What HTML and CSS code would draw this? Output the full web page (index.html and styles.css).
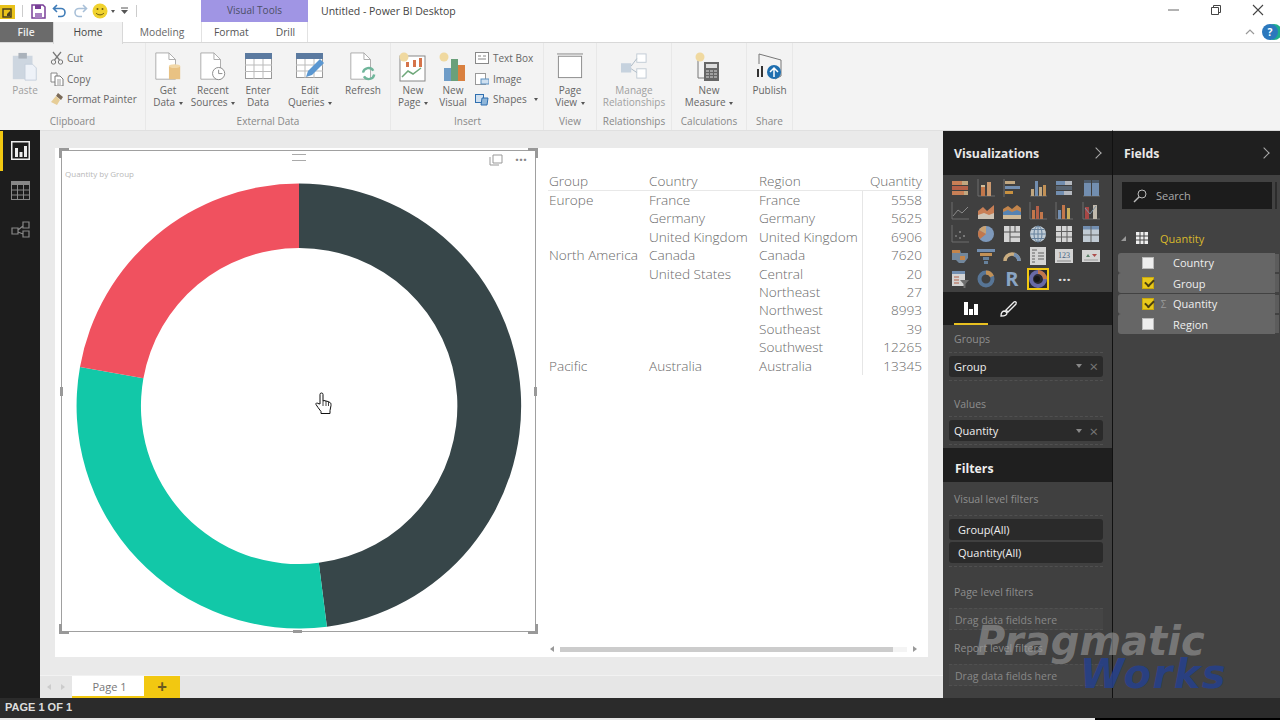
FILE: index.html
```html
<!DOCTYPE html>
<html>
<head lang="en">
    <meta charset="UTF-8">
    <title>Untitled - Power BI Desktop</title>
    <link rel="stylesheet" href="styles.css">
</head>
<body>
<!-- title bar -->
<header class="titlebar">
    <div class="qat">
        <svg class="app" width="15" height="15" viewBox="0 0 15 15"><rect width="15" height="15" y="1" fill="#e9c21b"/><path d="M3 5h8v8H3z" fill="none" stroke="#4a4020" stroke-width="1.5"/><path d="M7 10l3-3v5H7z" fill="#4a4020"/></svg>
        <i class="qat_sep"></i>
        <svg class="save" width="15" height="15" viewBox="0 0 15 15"><path d="M1 1h11l2 2v11H1z" fill="#fff" stroke="#7a3f98" stroke-width="1.5"/><path d="M4 1h6v4H4z" fill="#7a3f98"/><path d="M4 9h7v5H4z" fill="#a77fc0"/></svg>
        <svg width="15" height="14" viewBox="0 0 15 14"><path d="M5 1L1.5 4.5 5 8M2 4.500h7a4 4 0 0 1 0 8H6" fill="none" stroke="#3f7cb8" stroke-width="1.6"/></svg>
        <svg width="15" height="14" viewBox="0 0 15 14"><path d="M10 1l3.500 3.500L10 8M13 4.500H6a4 4 0 0 0 0 8h3" fill="none" stroke="#a9c0d8" stroke-width="1.6"/></svg>
        <svg class="smile" width="16" height="16" viewBox="0 0 16 16"><circle cx="8" cy="8" r="7.500" fill="#f0d22e"/><circle cx="5.500" cy="6" r="1" fill="#6b5a10"/><circle cx="10.500" cy="6" r="1" fill="#6b5a10"/><path d="M4 10c2 2.500 6 2.500 8 0" fill="none" stroke="#6b5a10"/></svg>
        <i class="caret qat_caret"></i>
        <svg class="qat_more" width="7" height="8" viewBox="0 0 7 8"><path d="M0 1h7" stroke="#555"/><path d="M0 3h7L3.500 7z" fill="#555"/></svg>
        <i class="qat_sep last"></i>
    </div>
    <div class="ctx">Visual Tools</div>
    <div class="win_title">Untitled - Power BI Desktop</div>
    <div class="win_btns">
        <svg width="14" height="14" viewBox="0 0 14 14"><path d="M1 7h11" stroke="#666"/></svg>
        <svg width="14" height="14" viewBox="0 0 14 14"><path d="M2.500 4.500h7v7h-7zM4.500 4V2.500h7v7H10" fill="none" stroke="#444"/></svg>
        <svg width="14" height="14" viewBox="0 0 14 14"><path d="M2 2l10 10M12 2L2 12" stroke="#444" stroke-width="1.100"/></svg>
    </div>
</header>

<!-- ribbon tabs -->
<nav class="tabs">
    <div class="tab_file">File</div>
    <div class="tab tab_home">Home</div>
    <div class="tab tab_model">Modeling</div>
    <div class="tab_ctx">
        <span>Format</span>
        <span>Drill</span>
    </div>
    <div class="tabs_right">
        <svg width="10" height="6" viewBox="0 0 10 6"><path d="M1 5l4-4 4 4" fill="none" stroke="#999" stroke-width="1.200"/></svg>
        <span class="help">?</span>
    </div>
</nav>

<!-- ribbon -->
<section class="ribbon">
    <div class="group g_clip">
        <div class="group_c">
            <div class="big w_paste dim">
                <svg width="28" height="32" viewBox="0 0 28 32"><rect x="1" y="4" width="21" height="25" fill="#cdd6e0"/><rect x="7" y="1" width="9" height="6" fill="#aab2bb"/><path d="M14 13h8l4 4v13H14z" fill="#eef2f8" stroke="#c5cfdc"/></svg>
                <span>Paste</span>
            </div>
            <div class="smalls">
                <div class="small"><svg width="14" height="14" viewBox="0 0 14 14"><circle cx="3.500" cy="11" r="2.200" fill="none" stroke="#777"/><circle cx="10.500" cy="11" r="2.200" fill="none" stroke="#777"/><path d="M4.500 9L11 1M9.500 9L3 1" stroke="#777" stroke-width="1.200"/></svg>Cut</div>
                <div class="small"><svg width="14" height="14" viewBox="0 0 14 14"><path d="M1 1h6v9H1z" fill="#fff" stroke="#888"/><path d="M5 4h5l3 3v7H5z" fill="#fff" stroke="#777"/><path d="M7 8h4M7 10h4M7 12h4" stroke="#999"/></svg>Copy</div>
                <div class="small"><svg width="14" height="14" viewBox="0 0 14 14"><path d="M8 1l5 4-2 3-5-4z" fill="#7a6a58"/><path d="M6 4l4 4-3 5-6-3z" fill="#e6cd97"/></svg>Format Painter</div>
            </div>
        </div>
        <div class="group_t">Clipboard</div>
    </div>
    <div class="group g_data">
        <div class="group_c">
            <div class="big w_get">
                <svg width="28" height="32" viewBox="0 0 28 32"><path d="M1 1h14l7 7v21H1z" fill="#fff" stroke="#aaa"/><path d="M15 1v7h7" fill="none" stroke="#aaa"/><path d="M15 15h12v14H15z" fill="#e9c283"/><ellipse cx="21" cy="15" rx="6" ry="2" fill="#f2d8a8"/></svg>
                <span>Get<br>Data <i class="caret"></i></span>
            </div>
            <div class="big w_recent">
                <svg width="28" height="32" viewBox="0 0 28 32"><path d="M1 1h14l7 7v21H1z" fill="#fff" stroke="#aaa"/><path d="M15 1v7h7" fill="none" stroke="#aaa"/><circle cx="20" cy="23" r="6.500" fill="#fff" stroke="#888"/><path d="M20 19v4h4" fill="none" stroke="#888"/></svg>
                <span>Recent<br>Sources <i class="caret"></i></span>
            </div>
            <div class="big w_enter">
                <svg width="27" height="26" viewBox="0 0 27 26" class="low"><rect x=".5" y=".5" width="26" height="25" fill="#fff" stroke="#999"/><rect width="27" height="6" fill="#5b7aa0"/><path d="M0 12h27M0 18.500h27M9 6v20M18 6v20" stroke="#bbb"/></svg>
                <span>Enter<br>Data</span>
            </div>
            <div class="big w_edit">
                <svg width="28" height="26" viewBox="0 0 28 26" class="low"><rect x=".5" y=".5" width="26" height="24" fill="#fff" stroke="#999"/><rect width="27" height="6" fill="#5b7aa0"/><path d="M0 12h27M0 18h27M9 6v19M18 6v19" stroke="#bbb"/><path d="M10 24l2-6L24 6l4 4-12 12z" fill="#5b97d1"/></svg>
                <span>Edit<br>Queries <i class="caret"></i></span>
            </div>
            <div class="big w_refresh">
                <svg width="28" height="32" viewBox="0 0 28 32"><path d="M1 1h14l7 7v21H1z" fill="#fff" stroke="#aaa"/><path d="M15 1v7h7" fill="none" stroke="#aaa"/><path d="M14 22a6 6 0 0 1 11-2M26 24a6 6 0 0 1-11 2" fill="none" stroke="#6fb59a" stroke-width="2.500"/></svg>
                <span>Refresh</span>
            </div>
        </div>
        <div class="group_t">External Data</div>
    </div>
    <div class="group g_insert">
        <div class="group_c">
            <div class="big w_newp">
                <svg width="28" height="30" viewBox="0 0 28 30"><rect x="1" y="4" width="25" height="25" fill="#fff" stroke="#888"/><path d="M7 15v-5h3v5zM14 15V8h3v7zM20 15V6h3v9z" fill="#d5734a"/><path d="M3 25l6-6 5 3 8-6" fill="none" stroke="#6fa87a" stroke-width="1.500"/><circle cx="5" cy="5" r="4.500" fill="#f0d9a0"/></svg>
                <span>New<br>Page <i class="caret"></i></span>
            </div>
            <div class="big w_newv">
                <svg width="28" height="30" viewBox="0 0 28 30"><rect x="5" y="16" width="7" height="13" fill="#6e9cc7"/><rect x="12" y="7" width="7" height="22" fill="#6aa07a"/><rect x="19" y="13" width="7" height="16" fill="#d9803f"/><circle cx="5" cy="5" r="4.500" fill="#f0d9a0"/></svg>
                <span>New<br>Visual</span>
            </div>
            <div class="smalls">
                <div class="small"><svg width="14" height="14" viewBox="0 0 14 14"><rect x=".5" y="1.500" width="13" height="11" fill="#fff" stroke="#888"/><path d="M3 5h3M3 8h8M8 5h3" stroke="#888"/></svg>Text Box</div>
                <div class="small"><svg width="14" height="14" viewBox="0 0 14 14"><rect x=".5" y="1.500" width="10" height="11" fill="#fff" stroke="#999"/><rect x="6" y="7" width="8" height="5" fill="#cfe0f0" stroke="#5b8fc0"/></svg>Image</div>
                <div class="small"><svg width="14" height="14" viewBox="0 0 14 14"><rect x=".5" y="2.500" width="8" height="8" fill="#cfe0f0" stroke="#2f6fb0"/><path d="M7 6l6 0-1 7H6z" fill="#8fb6d9" stroke="#2f6fb0"/></svg>Shapes <i class="caret"></i></div>
            </div>
        </div>
        <div class="group_t">Insert</div>
    </div>
    <div class="group g_view">
        <div class="group_c">
            <div class="big w_pview">
                <svg width="28" height="28" viewBox="0 0 28 28" class="low"><rect x="1.500" y="3.500" width="25" height="23" fill="#fff" stroke="#888"/><path d="M0 1h28" stroke="#bbb" stroke-width="2"/></svg>
                <span>Page<br>View <i class="caret"></i></span>
            </div>
        </div>
        <div class="group_t">View</div>
    </div>
    <div class="group g_rel">
        <div class="group_c">
            <div class="big w_manage dim">
                <svg width="28" height="28" viewBox="0 0 28 28" class="low"><rect y="11" width="11" height="10" fill="#c6d2de"/><rect x="17" y="1" width="10" height="9" fill="#fff" stroke="#c0cad4"/><rect x="17" y="17" width="10" height="10" fill="#fff" stroke="#c0cad4"/><path d="M11 14l6-8M11 17l6 4" stroke="#aab8c4"/></svg>
                <span>Manage<br>Relationships</span>
            </div>
        </div>
        <div class="group_t">Relationships</div>
    </div>
    <div class="group g_calc">
        <div class="group_c">
            <div class="big w_meas">
                <svg width="28" height="30" viewBox="0 0 28 30"><path d="M3 8v18h6" fill="none" stroke="#777"/><rect x="9" y="10" width="15" height="19" fill="#666"/><rect x="11" y="12" width="11" height="4" fill="#ddd"/><path d="M11 19h11M11 22h11M11 25h11" stroke="#ddd" stroke-dasharray="3 1"/><circle cx="5" cy="5" r="4.500" fill="#f0d9a0"/></svg>
                <span>New<br>Measure <i class="caret"></i></span>
            </div>
        </div>
        <div class="group_t">Calculations</div>
    </div>
    <div class="group g_share">
        <div class="group_c">
            <div class="big w_pub">
                <svg width="28" height="30" viewBox="0 0 28 30"><path d="M3 12V2l22 6v16l-6 3" fill="none" stroke="#777"/><path d="M1 17h2v8H1zM5 14h2v11H5z" fill="#333"/><circle cx="18" cy="20" r="7" fill="#1f6fb0"/><path d="M18 25v-8M14 20l4-4 4 4" fill="none" stroke="#fff" stroke-width="1.500"/></svg>
                <span>Publish</span>
            </div>
        </div>
        <div class="group_t">Share</div>
    </div>
</section>

<div class="main">
    <!-- left rail -->
    <aside class="rail">
        <div class="rail_btn on"><svg width="19" height="19" viewBox="0 0 19 19"><rect x=".75" y=".75" width="17.500" height="17.500" fill="none" stroke="#eee" stroke-width="1.500"/><path d="M4 7h3v9H4zM8.500 11h3v5h-3zM13 5h3v11h-3z" fill="#eee"/></svg></div>
        <div class="rail_btn"><svg width="19" height="19" viewBox="0 0 19 19"><rect x=".5" y=".5" width="18" height="18" fill="none" stroke="#888"/><rect width="19" height="4" fill="#888"/><path d="M0 9h19M0 14h19M6.500 4v15M12.500 4v15" stroke="#888"/></svg></div>
        <div class="rail_btn"><svg width="19" height="19" viewBox="0 0 19 19"><path d="M1 8h6v6H1zM12 2h6v6h-6zM12 11h6v6h-6zM7 10l5-4M7 12l5 2" fill="none" stroke="#888" stroke-width="1.200"/></svg></div>
    </aside>

    <!-- report canvas -->
    <div class="canvas">
        <div class="page_wrap">
            <div class="page">
                <!-- donut visual -->
                <div class="visual donut_v">
                    <div class="v_title">Quantity by Group</div>
                    <svg class="donut" width="446" height="446" viewBox="-223 -223 446 446">
                        <path d="M0 -222.500A222.500 222.500 0 0 1 27.900 220.700L19.800 156.800A158 158 0 0 0 0 -158Z" fill="#374649"/>
                        <path d="M27.900 220.700A222.500 222.500 0 0 1 -219 -39L-155.600 -27.700A158 158 0 0 0 19.800 156.800Z" fill="#12c8a8"/>
                        <path d="M-219 -39A222.500 222.500 0 0 1 0 -222.500L0 -158A158 158 0 0 0 -155.600 -27.700Z" fill="#f0515f"/>
                    </svg>
                    <div class="grip"></div>
                    <div class="v_tools">
                        <svg width="14" height="12" viewBox="0 0 14 12"><path d="M1 3v8h9M4 9V1h9v8z" fill="none" stroke="#999"/></svg>
                        <span>···</span>
                    </div>
                    <i class="hd tl"></i><i class="hd tr"></i><i class="hd bl"></i><i class="hd br"></i>
                    <i class="hd ml"></i><i class="hd mr"></i><i class="hd bm"></i>
                </div>
                <!-- matrix visual -->
                <div class="visual table_v">
                    <div class="t_row t_head"><div>Group</div><div>Country</div><div>Region</div><div class="num">Quantity</div></div>
                    <div class="t_row"><div>Europe</div><div>France</div><div>France</div><div class="num">5558</div></div>
                    <div class="t_row"><div></div><div>Germany</div><div>Germany</div><div class="num">5625</div></div>
                    <div class="t_row"><div></div><div>United Kingdom</div><div>United Kingdom</div><div class="num">6906</div></div>
                    <div class="t_row"><div>North America</div><div>Canada</div><div>Canada</div><div class="num">7620</div></div>
                    <div class="t_row"><div></div><div>United States</div><div>Central</div><div class="num">20</div></div>
                    <div class="t_row"><div></div><div></div><div>Northeast</div><div class="num">27</div></div>
                    <div class="t_row"><div></div><div></div><div>Northwest</div><div class="num">8993</div></div>
                    <div class="t_row"><div></div><div></div><div>Southeast</div><div class="num">39</div></div>
                    <div class="t_row"><div></div><div></div><div>Southwest</div><div class="num">12265</div></div>
                    <div class="t_row"><div>Pacific</div><div>Australia</div><div>Australia</div><div class="num">13345</div></div>
                    <div class="t_scroll">
                        <i class="arr_l"></i>
                        <div class="t_track"></div>
                        <i class="arr_r"></i>
                    </div>
                </div>
            </div>
        </div>
        <div class="pagetabs">
            <div class="pt_nav"><i class="arr_l"></i><i class="arr_r"></i></div>
            <div class="pt_page">Page 1</div>
            <div class="pt_add">+</div>
        </div>
    </div>

    <!-- visualizations pane -->
    <aside class="pane viz">
        <div class="pane_h">Visualizations<i class="chev"></i></div>
        <div class="tiles">
            <svg viewBox="0 0 18 18"><path d="M1 2h10v4H1zM1 12h12v4H1z" fill="#e08a5a"/><path d="M11 2h6v4h-6zM13 12h4v4h-4z" fill="#d8b98c"/><path d="M1 7h16v4H1z" fill="#c9664a"/></svg>
            <svg viewBox="0 0 18 18"><path d="M1 0v17h17" fill="none" stroke="#777"/><path d="M4 8h4v9H4z" fill="#d9814e"/><path d="M10 3h4v14h-4z" fill="#e2a878"/><path d="M4 6h4v2H4z" fill="#ecd3aa"/></svg>
            <svg viewBox="0 0 18 18"><path d="M1 0v18" stroke="#777"/><path d="M2 2h10v3H2z" fill="#d8b98c"/><path d="M2 7h15v3H2z" fill="#7b9cc4"/><path d="M2 12h8v3H2z" fill="#e0a040"/></svg>
            <svg viewBox="0 0 18 18"><path d="M1 17h17" stroke="#777"/><path d="M2 10h3v7H2zM10 8h3v9h-3z" fill="#d8b98c"/><path d="M6 2h3v15H6z" fill="#7b9cc4"/><path d="M14 6h3v11h-3z" fill="#d9a05a"/></svg>
            <svg viewBox="0 0 18 18"><path d="M1 2h9v4H1zM1 12h8v4H1z" fill="#7b9cc4"/><path d="M10 2h7v4h-7zM9 12h8v4H9z" fill="#c9ced6"/><path d="M1 7h16v4H1z" fill="#5d6b7a"/></svg>
            <svg viewBox="0 0 18 18"><path d="M1 17h17" stroke="#777"/><path d="M2 4h7v13H2zM10 4h7v13h-7z" fill="#7b9cc4"/><path d="M2 1h7v3H2zM10 1h7v3h-7z" fill="#4f5f72"/></svg>
            <svg viewBox="0 0 18 18"><path d="M1 0v17h17" fill="none" stroke="#777"/><path d="M2 14l5-6 4 3 6-6" fill="none" stroke="#999"/></svg>
            <svg viewBox="0 0 18 18"><path d="M1 17V9l5-4 4 4 7-6v14z" fill="#e08a5a"/><path d="M1 17v-4l6-2 5 2 5-2v6z" fill="#e6dccb"/></svg>
            <svg viewBox="0 0 18 18"><path d="M0 7l5-3 4 3 5-4 4 3v4H0z" fill="#d9914e"/><path d="M0 10l5-2 4 2 5-2 4 2v3H0z" fill="#5b8fc7"/><path d="M0 13h18v4H0z" fill="#e8d0a8"/></svg>
            <svg viewBox="0 0 18 18"><path d="M1 0v17h17" fill="none" stroke="#777"/><path d="M3 8h3v9H3zM11 10h3v7h-3z" fill="#d9814e"/><path d="M7 4h3v13H7z" fill="#c9664a"/></svg>
            <svg viewBox="0 0 18 18"><path d="M1 0v17h17" fill="none" stroke="#777"/><path d="M3 8h3v9H3z" fill="#7b9cc4"/><path d="M7 3h3v14H7z" fill="#d9814e"/><path d="M12 6h3v11h-3z" fill="#e0c060"/></svg>
            <svg viewBox="0 0 18 18"><path d="M1 0v17h17" fill="none" stroke="#777"/><path d="M3 5h4v12H3z" fill="#b94a48"/><path d="M11 3h4v14h-4z" fill="#d8d0c0"/><path d="M3 6l5 6 6-8" fill="none" stroke="#8aa0b8"/></svg>
            <svg viewBox="0 0 18 18"><path d="M1 0v17h17" fill="none" stroke="#777"/><circle cx="5" cy="11" r="1" fill="#888"/><circle cx="9" cy="7" r="1" fill="#999"/><circle cx="13" cy="11" r="1" fill="#999"/><circle cx="9" cy="13" r="1" fill="#888"/></svg>
            <svg viewBox="0 0 18 18"><circle cx="9" cy="9" r="8" fill="#89a9d1"/><path d="M9 9V1a8 8 0 0 0-7 4z" fill="#e3b47c"/><path d="M9 9L2 5a8 8 0 0 0 1 9z" fill="#d9814e"/></svg>
            <svg viewBox="0 0 18 18"><rect x="1" y="1" width="16" height="16" fill="#eee"/><path d="M1 7h16M7 1v16M7 12h10M12 1v6" stroke="#555"/></svg>
            <svg viewBox="0 0 18 18"><circle cx="9" cy="9" r="8" fill="#d8e6f2"/><path d="M1 9h16M9 1v16M3 4.500h12M3 13.500h12" stroke="#6d8dad"/><ellipse cx="9" cy="9" rx="4" ry="8" fill="none" stroke="#6d8dad"/></svg>
            <svg viewBox="0 0 18 18"><rect x="1" y="1" width="16" height="16" fill="#eee"/><path d="M1 6.500h16M1 12h16M6.500 1v16M12 1v16" stroke="#666"/></svg>
            <svg viewBox="0 0 18 18"><rect x="1" y="1" width="16" height="16" fill="#d8e4ee"/><rect x="1" y="1" width="16" height="3.500" fill="#7b9cc4"/><path d="M9 1v16M1 10h16" stroke="#666"/></svg>
            <svg viewBox="0 0 18 18"><path d="M1 3h8l1 3h7v5l-4 5H8l-3-3H1z" fill="#7b94ad"/><path d="M1 3h8v3H1zM9 9h5v4H9z" fill="#d9914e"/></svg>
            <svg viewBox="0 0 18 18"><path d="M0 2h18v3H0z" fill="#7b9cc4"/><path d="M3 6h12v3H3z" fill="#d9a05a"/><path d="M6 10h6v3H6zM7 14h4v3H7z" fill="#6d8dad"/></svg>
            <svg viewBox="0 0 18 18"><path d="M2 14a7 7 0 0 1 14 0" fill="none" stroke="#e3c08c" stroke-width="3.500"/><path d="M11 7.500a7 7 0 0 1 5 6.500" fill="none" stroke="#7b9cc4" stroke-width="3.500"/></svg>
            <svg viewBox="0 0 18 18"><rect x="1" y="0" width="16" height="18" fill="#eee"/><path d="M3 3h5M3 6h3M3 9h3M3 12h3M3 15h3M9 6h6M9 9h6M9 12h6" stroke="#666"/></svg>
            <svg viewBox="0 0 18 18"><rect y="2" width="18" height="14" fill="#eee"/><text x="9" y="11" font-size="8" font-family="Liberation Serif" text-anchor="middle" fill="#48688c">123</text><path d="M2 14h14" stroke="#999"/></svg>
            <svg viewBox="0 0 18 18"><rect y="3" width="18" height="12" fill="#eee"/><path d="M4 10l2-3 2 3z" fill="#5f8d70"/><path d="M10 7h5l-2.500 3z" fill="#c0504d"/><path d="M2 13h14" stroke="#aaa"/></svg>
            <svg viewBox="0 0 18 18"><rect x="1" y="1" width="13" height="15" fill="#eee"/><rect x="1" y="1" width="13" height="3" fill="#7b9cc4"/><path d="M3 7h5M3 10h5M3 13h5" stroke="#c9664a"/><path d="M9 10h9l-3.500 4v4h-2v-4z" fill="#777"/></svg>
            <svg viewBox="0 0 18 18"><circle cx="9" cy="9" r="6.500" fill="none" stroke="#5c7fa6" stroke-width="4"/><path d="M9 2.500a6.500 6.500 0 0 1 6 4" fill="none" stroke="#d9a05a" stroke-width="4"/></svg>
            <span class="tile_r">R</span>
            <div class="tile_on"><svg viewBox="0 0 18 18"><rect width="18" height="18" fill="#26262e"/><circle cx="9" cy="9" r="7" fill="none" stroke="#6f72b8" stroke-width="4"/><path d="M9 2a7 7 0 0 1 7 7" fill="none" stroke="#d9814e" stroke-width="4"/><circle cx="8" cy="9" r="3" fill="#111"/></svg></div>
            <span class="tile_more">···</span>
        </div>
        <div class="viz_tabs">
            <div class="vt on"><svg width="16" height="14" viewBox="0 0 16 14"><path d="M1 1h4v13H1zM6 8h4v6H6zM11 3h4v11h-4z" fill="#fff"/></svg></div>
            <div class="vt"><svg width="20" height="18" viewBox="0 0 20 18"><path d="M2 16c0-3 1-5 4-5l2 2c0 2-3 3-6 3zM7 10L15 2c1-1 3 0 2 2l-8 8z" fill="none" stroke="#eee" stroke-width="1.300"/></svg></div>
        </div>
        <div class="wells">
            <div class="w_label">Groups</div>
            <div class="well"><div class="pill">Group<i class="caret"></i><b>×</b></div></div>
            <div class="w_label">Values</div>
            <div class="well"><div class="pill">Quantity<i class="caret"></i><b>×</b></div></div>
        </div>
        <div class="filters_h">Filters</div>
        <div class="filters">
            <div class="w_label">Visual level filters</div>
            <div class="well"><div class="pill">Group(All)</div><div class="pill">Quantity(All)</div></div>
            <div class="w_label">Page level filters</div>
            <div class="well drop">Drag data fields here</div>
            <div class="w_label">Report level filters</div>
            <div class="well drop">Drag data fields here</div>
        </div>
    </aside>

    <!-- fields pane -->
    <aside class="pane fields">
        <div class="pane_h">Fields<i class="chev"></i></div>
        <div class="search_w">
            <div class="search">
                <svg width="14" height="14" viewBox="0 0 14 14"><circle cx="9" cy="5" r="4" fill="none" stroke="#bbb"/><path d="M6 8l-5 5" stroke="#bbb" stroke-width="1.500"/></svg>
                Search
            </div>
            <i class="search_end"></i>
        </div>
        <div class="tree">
            <div class="tree_h">
                <i class="tri"></i>
                <svg width="12" height="12" viewBox="0 0 12 12"><rect width="12" height="12" fill="#eee"/><path d="M0 4h12M0 8h12M4 0v12M8 0v12" stroke="#444"/></svg>
                <span>Quantity</span>
            </div>
            <div class="field"><i class="chk"></i><em></em>Country</div>
            <div class="field"><i class="chk yes"></i><em></em>Group</div>
            <div class="field"><i class="chk yes"></i><em>Σ</em>Quantity</div>
            <div class="field"><i class="chk"></i><em></em>Region</div>
        </div>
    </aside>
</div>

<footer class="status">PAGE 1 OF 1</footer>
<div class="bottom_edge"></div>

<!-- overlays -->
<svg class="hand" width="18" height="24" viewBox="0 0 18 24"><path d="M5 12V2.500a1.500 1.500 0 0 1 3 0V9l1-.5 2 .5 2 .5 2 1c1 .5 1 1.500 1 3l-1 5v3H6v-2l-3-4-2-3c-.5-1.500 1-2 2-1z" fill="#fff" stroke="#111"/><path d="M8 9v5M11 9v5M13.500 10v4" stroke="#111" stroke-width=".8"/></svg>
<div class="mark">
    <div class="mark_a">Pragmatic</div>
    <div class="mark_b">Works</div>
</div>
</body>
</html>
```

FILE: styles.css
```css
* {
    box-sizing: border-box;
}
body {
    margin: 0;
    width: 1280px;
    height: 720px;
    overflow: hidden;
    position: relative;
    display: flex;
    flex-direction: column;
    background: #fff;
    font-family: "Open Sans", "Liberation Sans", sans-serif;
    font-size: 10px;
    color: #666;
}
i, em {
    font-style: normal;
}
svg {
    display: block;
    flex: none;
}
.caret {
    display: inline-block;
    width: 0;
    height: 0;
    border: 2.5px solid transparent;
    border-top: 3px solid #555;
    border-bottom: 0;
    vertical-align: middle;
    margin-left: 1px;
}

/* title bar */
.titlebar {
    height: 22px;
    display: flex;
    flex: none;
}
.qat {
    width: 201px;
    display: flex;
    align-items: center;
    gap: 6px;
}
.qat_sep {
    width: 1px;
    height: 12px;
    background: #ccc;
    margin: 0 2px 0 1px;
}
.qat_sep.last {
    margin-left: 2px;
}
.qat .smile {
    margin-left: -2px;
}
.qat_caret {
    margin-left: -3px;
}
.ctx {
    width: 107px;
    background: #a095e4;
    color: #4c4f66;
    font-size: 10px;
    text-align: center;
    line-height: 20px;
}
.win_title {
    margin-left: 13px;
    font-size: 10.5px;
    line-height: 22px;
    color: #444;
}
.win_btns {
    margin-left: auto;
    display: flex;
    gap: 28px;
    padding: 3px 15px 0 0;
}

/* tabs */
.tabs {
    height: 21px;
    display: flex;
    flex: none;
    font-size: 10.3px;
    line-height: 20px;
    position: relative;
    border-bottom: 1px solid #d8d8d8;
}
.tab_file {
    width: 53px;
    background: #6b6b6b;
    color: #eee;
    text-align: center;
    padding-right: 1px;
    font-weight: 600;
}
.tab {
    text-align: center;
}
.tab_home {
    width: 70px;
    height: 22px;
    background: #f3f3f3;
    border: 1px solid #d8d8d8;
    border-width: 0 1px;
    color: #444;
}
.tab_model {
    width: 78px;
}
.tab_ctx {
    width: 107px;
    display: flex;
    gap: 27px;
    padding-left: 12px;
    border: 1px solid #e2e2e2;
    border-width: 0 1px;
    color: #555;
}
.tabs_right {
    margin-left: auto;
    display: flex;
    align-items: center;
    gap: 7px;
    margin-right: 2px;
}
.help {
    width: 16px;
    height: 16px;
    border-radius: 50%;
    background: #2b78bd;
    color: #fff;
    font-weight: 700;
    text-align: center;
    line-height: 16px;
    box-shadow: 4px 0 0 #1fae8c;
}

/* ribbon */
.ribbon {
    height: 87px;
    background: #f3f3f3;
    display: flex;
    flex: none;
}
.group {
    display: flex;
    flex-direction: column;
    border-right: 1px solid #e8e8e8;
}
.group_c {
    height: 71px;
    display: flex;
    padding-top: 5px;
}
.group_t {
    text-align: center;
    line-height: 14px;
    color: #888;
}
.g_clip { width: 146px; }
.g_data { width: 245px; }
.g_insert { width: 153px; padding-left: 1px; }
.g_view { width: 53px; }
.g_rel { width: 75px; }
.g_calc { width: 75px; }
.g_share { width: 46px; }

.big {
    display: flex;
    flex-direction: column;
    align-items: center;
    text-align: center;
    line-height: 12px;
    color: #666;
}
.big svg {
    height: 35px;
    padding: 4px 0 1px;
}
.big svg.low {
    padding: 5px 0 4px;
}
.big span {
    white-space: nowrap;
    padding-top: 1px;
}
.dim span {
    color: #a0a0a0;
}
.w_paste { width: 50px; }
.w_get { width: 44px; }
.w_recent { width: 46px; }
.w_enter { width: 44px; }
.w_edit { width: 60px; }
.w_refresh { width: 46px; }
.w_newp { width: 42px; }
.w_newv { width: 38px; }
.w_pview, .w_manage, .w_meas, .w_pub {
    width: 100%;
}

.smalls {
    display: flex;
    flex-direction: column;
    gap: 6.5px;
    padding-top: 3px;
}
.g_insert .smalls {
    margin-left: 3px;
}
.g_insert .small {
    gap: 4px;
}
.small {
    height: 14px;
    display: flex;
    align-items: center;
    gap: 3px;
    white-space: nowrap;
    line-height: 14px;
}
.small .caret {
    margin-left: 3px;
}

/* main area */
.main {
    height: 568px;
    display: flex;
    flex: none;
}
.rail {
    width: 40px;
    background: #1d1d1d;
    flex: none;
    padding-top: 1px;
}
.rail_btn {
    height: 39.5px;
    display: flex;
    align-items: center;
    justify-content: center;
}
.rail_btn.on {
    border-left: 3px solid #f2c811;
    padding-right: 3px;
}
.canvas {
    width: 903px;
    flex: none;
    background: #eaeaea;
    display: flex;
    flex-direction: column;
    border-top: 1px solid #e0e0e0;
}
.page_wrap {
    flex: 1;
    padding: 17px 15px 18px 15px;
    display: flex;
}
.page {
    flex: 1;
    background: #fff;
    position: relative;
}
.visual {
    position: absolute;
}
.donut_v {
    left: 6px;
    top: 2px;
    width: 475px;
    height: 482px;
    border: 1px solid #a0a0a0;
}
.donut {
    position: absolute;
    left: 14px;
    top: 31.5px;
}
.v_title {
    position: absolute;
    left: 3px;
    top: 17px;
    font-size: 8px;
    color: #b8b8b8;
}
.grip {
    position: absolute;
    left: 230px;
    top: 3px;
    width: 14px;
    height: 7px;
    border-top: 1px solid #aaa;
    border-bottom: 1px solid #aaa;
}
.v_tools {
    position: absolute;
    right: 8px;
    top: 2px;
    display: flex;
    gap: 12px;
    align-items: center;
    font-size: 14px;
    line-height: 14px;
    font-weight: 700;
    color: #888;
}
.hd {
    position: absolute;
    background: #999;
}
.tl, .tr, .bl, .br {
    width: 10px;
    height: 10px;
    background: none;
    border: 0 solid #999;
}
.tl { left: -3px; top: -3px; border-width: 3px 0 0 3px; }
.tr { right: -3px; top: -3px; border-width: 3px 3px 0 0; }
.bl { left: -3px; bottom: -3px; border-width: 0 0 3px 3px; }
.br { right: -3px; bottom: -3px; border-width: 0 3px 3px 0; }
.ml, .mr {
    top: 236px;
    width: 3px;
    height: 9px;
}
.ml { left: -2px; }
.mr { right: -2px; }
.bm {
    left: 231px;
    bottom: -2px;
    width: 9px;
    height: 3px;
}

/* matrix */
.table_v {
    left: 493px;
    top: 24px;
    width: 375px;
    font-size: 13.6px;
    font-weight: 300;
    color: #6a6a6a;
}
.t_row {
    display: grid;
    grid-template-columns: 100px 110px 104px 60px;
    height: 18.4px;
    line-height: 18px;
    white-space: nowrap;
}
.t_row > div {
    padding-left: 1px;
}
.t_row .num {
    text-align: right;
    border-left: 1px solid #e6e6e6;
}
.t_head {
    height: 19px;
    border-bottom: 1px solid #e8e8e8;
}
.t_head .num {
    border-left: 0;
}
.t_scroll {
    position: absolute;
    left: 2px;
    top: 474px;
    width: 367px;
    display: flex;
    align-items: center;
    gap: 6px;
}
.t_track {
    flex: 1;
    height: 5px;
    background: linear-gradient(90deg, #ccc 0, #ccc 333px, #f4f4f4 333px);
}
.arr_l, .arr_r {
    display: block;
    width: 0;
    height: 0;
    border: 3px solid transparent;
}
.arr_l {
    border-right: 4px solid #999;
    border-left: 0;
}
.arr_r {
    border-left: 4px solid #999;
    border-right: 0;
}

/* page tabs */
.pagetabs {
    height: 23px;
    flex: none;
    display: flex;
    background: #e6e6e6;
    border-top: 1px solid #f2f2f2;
}
.pt_nav {
    width: 32px;
    display: flex;
    align-items: center;
    justify-content: center;
    gap: 10px;
}
.pt_nav .arr_l {
    border-right-color: #ccc;
}
.pt_nav .arr_r {
    border-left-color: #ccc;
}
.pt_page {
    width: 72px;
    background: #fff;
    border-bottom: 2px solid #f2c811;
    text-align: center;
    padding-left: 3px;
    font-size: 11px;
    line-height: 22px;
    color: #777;
}
.pt_add {
    width: 36px;
    background: #f2c811;
    text-align: center;
    font-size: 17px;
    font-weight: 700;
    line-height: 21px;
    color: #6b5a20;
}

/* right panes */
.pane {
    background: #404040;
    flex: none;
    border-top: 1px solid #d8d8d8;
    display: flex;
    flex-direction: column;
    color: #eee;
}
.viz {
    width: 170px;
    border-right: 1px solid #111;
}
.fields {
    width: 167px;
    background: #424242;
}
.pane_h {
    height: 44px;
    flex: none;
    background: #1f1f1f;
    display: flex;
    align-items: center;
    justify-content: space-between;
    padding: 0 12px 0 11px;
    font-size: 12.3px;
    font-weight: 700;
    color: #e8e8e8;
}
.chev {
    width: 8px;
    height: 8px;
    border: 1px solid #aaa;
    border-width: 1px 1px 0 0;
    transform: rotate(45deg);
}
.tiles {
    height: 117px;
    flex: none;
    padding: 2px 0 0 3.5px;
    display: grid;
    grid-template-columns: repeat(6, 26.2px);
    grid-auto-rows: 22.7px;
    align-items: center;
    justify-items: center;
}
.tiles svg {
    width: 18px;
    height: 18px;
    opacity: 0.85;
}
.tile_r {
    font-size: 20px;
    font-weight: 700;
    color: #8aa5c4;
    line-height: 20px;
}
.tile_on {
    width: 22px;
    height: 22px;
    border: 2px solid #f2c811;
}
.tile_more {
    font-size: 15px;
    font-weight: 700;
    line-height: 15px;
    color: #ddd;
}
.viz_tabs {
    height: 33px;
    flex: none;
    background: #1f1f1f;
    display: flex;
    padding-left: 11px;
    gap: 4px;
}
.vt {
    width: 34px;
    display: flex;
    align-items: center;
    justify-content: center;
}
.vt.on {
    border-bottom: 2px solid #e8c020;
}
.wells {
    height: 123px;
    flex: none;
    padding-top: 7px;
}
.w_label {
    font-size: 10.5px;
    line-height: 14px;
    height: 14px;
    color: #8e8e8e;
    margin: 0 0 5.5px 11px;
}
.well {
    margin: 0 9px 16px 6px;
    padding: 3px 0;
    border: 1px dashed #505050;
    border-width: 1px 0;
}
.pill {
    height: 21px;
    border-radius: 3px;
    background: #2a2a2a;
    display: flex;
    align-items: center;
    padding: 0 5px;
    font-size: 11px;
    color: #eee;
    margin-bottom: 2px;
}
.pill:last-child {
    margin-bottom: 0;
}
.pill .caret {
    margin-left: auto;
    border-width: 3px;
    border-top-width: 4px;
    border-bottom: 0;
    border-top-color: #888;
}
.pill b {
    margin-left: 7px;
    font-weight: 400;
    color: #777;
    font-size: 15px;
}
.filters_h {
    height: 34px;
    flex: none;
    background: #1f1f1f;
    padding-left: 12px;
    font-size: 12.3px;
    font-weight: 700;
    line-height: 41px;
    color: #eee;
}
.filters {
    padding-top: 10px;
}
.filters .w_label {
    margin-bottom: 9px;
}
.filters .pill {
    padding-left: 9px;
}
.filters .well {
    margin-bottom: 18px;
}
.filters .well.drop {
    margin-bottom: 11px;
    height: 22px;
    padding: 1px 0 0 6px;
    line-height: 20px;
    font-size: 10.5px;
    color: #888;
    background: #454545;
}

/* fields */
.search_w {
    height: 40px;
    flex: none;
    padding: 7px 0 0 9px;
    display: flex;
    gap: 3px;
}
.search {
    width: 150px;
    height: 27px;
    background: #1c1c1c;
    display: flex;
    align-items: center;
    gap: 9px;
    padding-left: 11px;
    font-size: 11px;
    color: #aaa;
}
.search_end {
    width: 2px;
    height: 27px;
    background: #2c2c2c;
}
.tree {
    padding: 13px 0 0 5px;
}
.tree_h {
    display: flex;
    align-items: center;
    height: 20px;
    margin-bottom: 4.5px;
    font-size: 11px;
    color: #d8b82c;
}
.tri {
    width: 0;
    height: 0;
    border-style: solid;
    border-width: 0 0 5px 5px;
    border-color: transparent transparent #999 transparent;
    margin: 0 10px 0 3px;
}
.tree_h span {
    margin-left: 12px;
}
.field {
    height: 20px;
    margin-bottom: 0.6px;
    border-radius: 3px 0 0 3px;
    background: #666;
    width: 157px;
    display: flex;
    align-items: center;
    padding-left: 24px;
    font-size: 11px;
    color: #eee;
    box-shadow: 5px 0 0 -1px #5c5c5c;
}
.field em {
    width: 13px;
    margin-left: 3px;
    margin-right: 3px;
    font-size: 10px;
    color: #999;
    text-align: center;
}
.chk {
    width: 12px;
    height: 12px;
    background: #eee;
    border: 1px solid #bbb;
    position: relative;
}
.chk.yes {
    background: #e8c81c;
    border-color: #c9a90e;
}
.chk.yes::after {
    content: "";
    position: absolute;
    left: 2px;
    top: 1px;
    width: 7px;
    height: 4px;
    border: 2px solid #4a3f10;
    border-width: 0 0 2px 2px;
    transform: rotate(-45deg);
}

/* bottom */
.status {
    height: 20px;
    flex: none;
    background: #2b2b2b;
    padding-left: 5px;
    font-family: "Liberation Sans", sans-serif;
    font-size: 11px;
    font-weight: 700;
    line-height: 19px;
    color: #ddd;
}
.bottom_edge {
    height: 2px;
    flex: none;
    background: linear-gradient(90deg, #e8e8e8 0, #e8e8e8 1095px, #000 1095px);
}

/* overlays */
.hand {
    position: absolute;
    left: 315px;
    top: 392px;
}
.mark {
    position: absolute;
    left: 976px;
    top: 625px;
    font-family: "DejaVu Sans", sans-serif;
    font-style: italic;
    font-weight: 700;
    line-height: 33px;
    pointer-events: none;
}
.mark_a {
    font-size: 40px;
    color: rgba(150, 150, 150, 0.65);
}
.mark_b {
    font-size: 40px;
    margin-left: 104px;
    letter-spacing: 1.5px;
    color: rgba(38, 64, 138, 0.9);
}
```
